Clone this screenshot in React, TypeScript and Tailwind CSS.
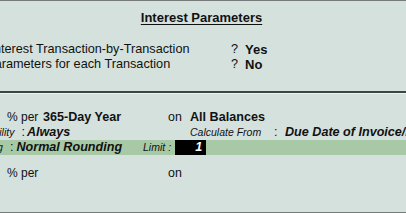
import React from "react";

export default function App() {
  return (
    <div
      className="w-[406px] h-[213px] overflow-hidden bg-[#d5e1dd] border-t border-b border-[#767a78] text-[#111] text-[13px] leading-[15px] flex flex-col"
      style={{ fontFamily: '"Liberation Sans", Arial, sans-serif' }}
    >
      {/* Title */}
      <div className="pt-[9px] flex justify-center pr-[3px]">
        <span className="font-bold underline underline-offset-[2px] decoration-[1px]">Interest Parameters</span>
      </div>

      {/* Top yes/no rows */}
      <div className="mt-[17px] flex flex-col whitespace-nowrap text-[12.7px]">
        <div className="flex ml-[-66px]">
          <span className="w-[297px] shrink-0">Calculate Interest Transaction-by-Transaction</span>
          <span className="w-[14px] shrink-0">?</span>
          <span className="font-bold text-[13px]">Yes</span>
        </div>
        <div className="flex ml-[-66px]">
          <span className="w-[297px] shrink-0">Override Parameters for each Transaction</span>
          <span className="w-[14px] shrink-0">?</span>
          <span className="font-bold text-[13px]">No</span>
        </div>
      </div>

      {/* Separator */}
      <div className="mt-[19px] h-[2px] bg-[#3e4642]" />
      <div className="h-[1px] bg-[#eef3f1]" />

      {/* Lower section */}
      <div className="mt-[16px] flex flex-col whitespace-nowrap text-[12.6px]">
        <div className="flex items-baseline pl-[7px]">
          <span className="w-[36px] shrink-0 text-[12px]">% per</span>
          <span className="w-[125px] shrink-0 font-bold">365-Day Year</span>
          <span className="w-[22px] shrink-0 text-[12.4px]">on</span>
          <span className="font-bold">All Balances</span>
        </div>
        <div className="flex items-baseline ml-[-41px]">
          <span className="w-[231px] shrink-0 flex items-baseline">
            <span className="italic text-[10.5px]">Applicability</span>
            <span className="pl-[7px] pr-[2px]">:</span>
            <span className="font-bold italic">Always</span>
          </span>
          <span className="w-[84px] shrink-0 italic text-[10.5px]">Calculate From</span>
          <span className="w-[11px] shrink-0">:</span>
          <span className="font-bold italic">Due Date of Invoice/Ref</span>
        </div>
        <div className="h-[15px] bg-[#a8c9a6] flex items-baseline">
          <div className="flex items-baseline ml-[-42px]">
            <span className="w-[185px] shrink-0 flex items-baseline">
              <span className="italic text-[10.5px]">Rounding</span>
              <span className="pl-[7px] pr-[3px]">:</span>
              <span className="font-bold italic">Normal Rounding</span>
            </span>
            <span className="italic text-[10.5px]">Limit</span>
            <span className="italic text-[10.5px] pl-[3px] w-[10px]">:</span>
            <span className="self-stretch h-[15px] w-[31px] bg-black text-white font-bold italic flex justify-end pr-[4px]">1</span>
          </div>
        </div>
        <div className="mt-[11px] flex items-baseline pl-[7px]">
          <span className="w-[161px] shrink-0 text-[12px]">% per</span>
          <span className="text-[12.4px]">on</span>
        </div>
      </div>
    </div>
  );
}
